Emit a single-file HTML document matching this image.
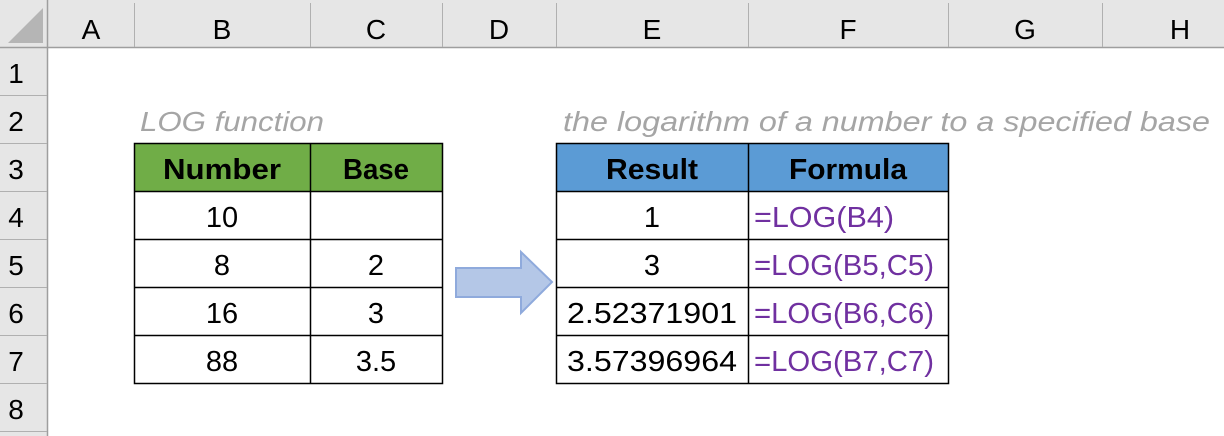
<!DOCTYPE html>
<html><head><meta charset="utf-8"><style>
html,body{margin:0;padding:0;background:#fff;width:1224px;height:436px;overflow:hidden}
svg{display:block}
text{font-family:"Liberation Sans",sans-serif}
</style></head><body>
<svg width="1224" height="436" viewBox="0 0 1224 436" xmlns="http://www.w3.org/2000/svg">
<rect x="0" y="0" width="1224" height="47" fill="#e6e6e6"/>
<rect x="0" y="0" width="47" height="436" fill="#e6e6e6"/>
<polygon points="8,43 43,43 43,8" fill="#b5b5b5"/>
<line x1="0" y1="47.5" x2="1224" y2="47.5" stroke="#9e9e9e" stroke-width="1.5"/>
<line x1="47.5" y1="0" x2="47.5" y2="436" stroke="#9e9e9e" stroke-width="1.5"/>
<g stroke="#b0b0b0" stroke-width="1">
<line x1="134.5" y1="3" x2="134.5" y2="47"/><line x1="310.5" y1="3" x2="310.5" y2="47"/>
<line x1="442.5" y1="3" x2="442.5" y2="47"/><line x1="556.5" y1="3" x2="556.5" y2="47"/>
<line x1="748.5" y1="3" x2="748.5" y2="47"/><line x1="948.5" y1="3" x2="948.5" y2="47"/>
<line x1="1102.5" y1="3" x2="1102.5" y2="47"/>
<line x1="0" y1="95.5" x2="47" y2="95.5"/><line x1="0" y1="143.5" x2="47" y2="143.5"/>
<line x1="0" y1="191.5" x2="47" y2="191.5"/><line x1="0" y1="239.5" x2="47" y2="239.5"/>
<line x1="0" y1="287.5" x2="47" y2="287.5"/><line x1="0" y1="335.5" x2="47" y2="335.5"/>
<line x1="0" y1="383.5" x2="47" y2="383.5"/><line x1="0" y1="431.5" x2="47" y2="431.5"/>
</g>
<g font-size="28" text-anchor="middle" fill="#000">
<text x="91" y="39">A</text><text x="222" y="39">B</text><text x="376" y="39">C</text>
<text x="499" y="39">D</text><text x="652" y="39">E</text><text x="848" y="39">F</text>
<text x="1025" y="39">G</text><text x="1180" y="39">H</text>
<text x="16" y="83">1</text><text x="16" y="131">2</text><text x="16" y="179">3</text>
<text x="16" y="227">4</text><text x="16" y="275">5</text><text x="16" y="323">6</text>
<text x="16" y="371">7</text><text x="16" y="419">8</text>
</g>
<g font-size="28" font-style="italic" fill="#a5a5a5">
<text x="140" y="131" textLength="184" lengthAdjust="spacingAndGlyphs">LOG function</text>
<text x="563" y="131" textLength="647" lengthAdjust="spacingAndGlyphs">the logarithm of a number to a specified base</text>
</g>
<rect x="134" y="143" width="308" height="48" fill="#70ad47"/>
<rect x="556" y="143" width="392" height="48" fill="#5b9bd5"/>
<g stroke="#000" stroke-width="1.5" fill="none">
<rect x="134.5" y="143.5" width="308" height="240"/>
<line x1="310.5" y1="143" x2="310.5" y2="383"/>
<line x1="134" y1="191.5" x2="442" y2="191.5"/><line x1="134" y1="239.5" x2="442" y2="239.5"/>
<line x1="134" y1="287.5" x2="442" y2="287.5"/><line x1="134" y1="335.5" x2="442" y2="335.5"/>
<rect x="556.5" y="143.5" width="392" height="240"/>
<line x1="748.5" y1="143" x2="748.5" y2="383"/>
<line x1="556" y1="191.5" x2="948" y2="191.5"/><line x1="556" y1="239.5" x2="948" y2="239.5"/>
<line x1="556" y1="287.5" x2="948" y2="287.5"/><line x1="556" y1="335.5" x2="948" y2="335.5"/>
</g>
<g font-size="29" text-anchor="middle" fill="#000">
<text x="222" y="179" font-weight="bold" textLength="118" lengthAdjust="spacingAndGlyphs">Number</text>
<text x="376" y="179" font-weight="bold" textLength="66" lengthAdjust="spacingAndGlyphs">Base</text>
<text x="222" y="227">10</text>
<text x="222" y="275">8</text><text x="376" y="275">2</text>
<text x="222" y="323">16</text><text x="376" y="323">3</text>
<text x="222" y="371">88</text><text x="376" y="371">3.5</text>
<text x="652" y="179" font-weight="bold" textLength="92" lengthAdjust="spacingAndGlyphs">Result</text>
<text x="848" y="179" font-weight="bold" textLength="118" lengthAdjust="spacingAndGlyphs">Formula</text>
<text x="652" y="227">1</text>
<text x="652" y="275">3</text>
<text x="652" y="323" textLength="170" lengthAdjust="spacingAndGlyphs">2.52371901</text>
<text x="652" y="371" textLength="170" lengthAdjust="spacingAndGlyphs">3.57396964</text>
</g>
<g font-size="29" fill="#7030a0">
<text x="754" y="227" textLength="140" lengthAdjust="spacingAndGlyphs">=LOG(B4)</text>
<text x="754" y="275" textLength="180" lengthAdjust="spacingAndGlyphs">=LOG(B5,C5)</text>
<text x="754" y="323" textLength="180" lengthAdjust="spacingAndGlyphs">=LOG(B6,C6)</text>
<text x="754" y="371" textLength="180" lengthAdjust="spacingAndGlyphs">=LOG(B7,C7)</text>
</g>
<polygon points="456,268 521,268 521,252 552,282 521,313 521,297 456,297" fill="#b4c7e7" stroke="#8faadc" stroke-width="2"/>
</svg>
</body></html>
